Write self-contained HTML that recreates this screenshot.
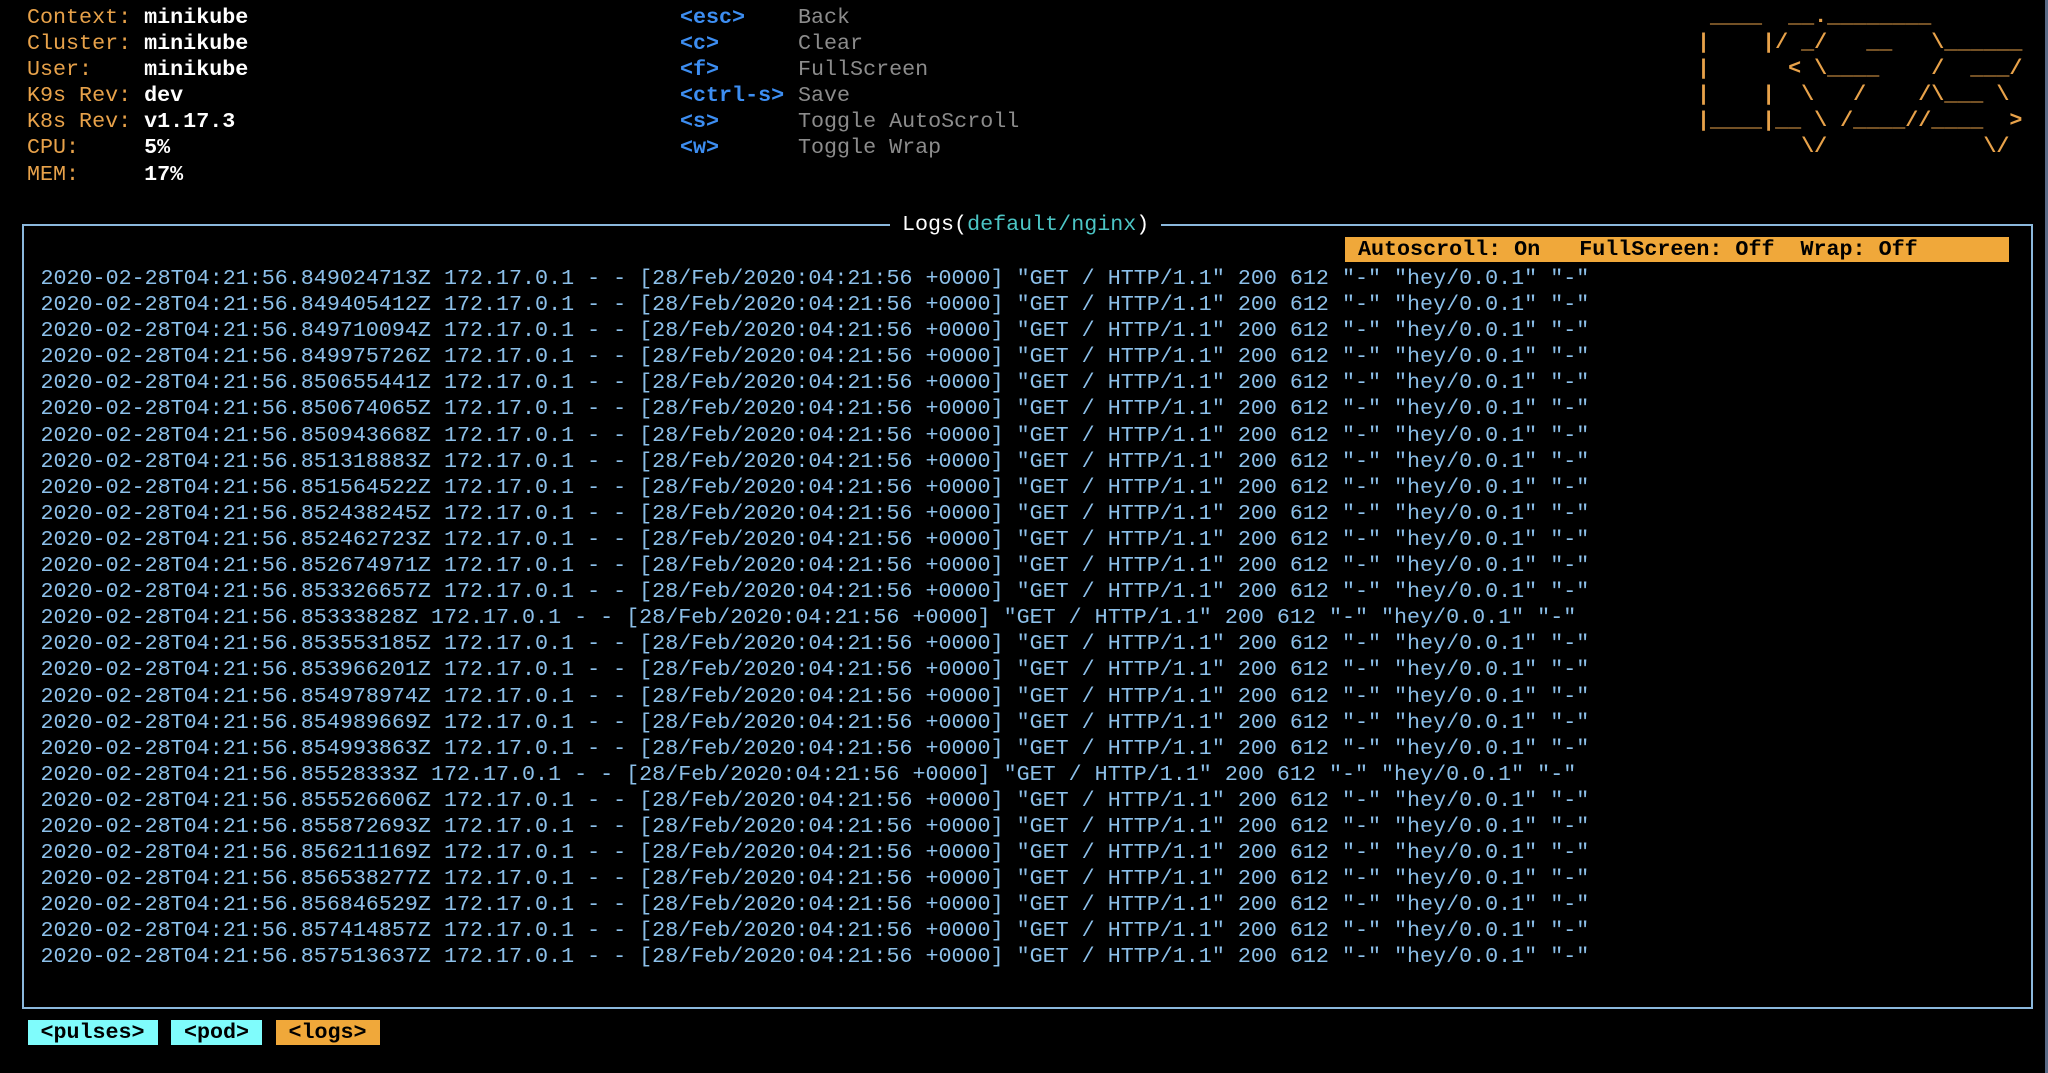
<!DOCTYPE html>
<html><head><meta charset="utf-8"><style>
html,body{margin:0;padding:0;background:#000;width:2048px;height:1073px;overflow:hidden;position:relative}
*{font-family:"Liberation Mono",monospace;font-size:21.7px;line-height:26.1px}
.a{position:absolute;white-space:pre}
.o{color:#e8a24a}.w{color:#fff;font-weight:bold}
.k{color:#3d8ef2;font-weight:bold}.d{color:#8c8c8c}
.log{color:#8cc0ea}
</style></head><body>
<div class="a" style="left:27px;top:5px"><span class="o">Context: </span><span class="w">minikube</span>
<span class="o">Cluster: </span><span class="w">minikube</span>
<span class="o">User:    </span><span class="w">minikube</span>
<span class="o">K9s Rev: </span><span class="w">dev</span>
<span class="o">K8s Rev: </span><span class="w">v1.17.3</span>
<span class="o">CPU:     </span><span class="w">5%</span>
<span class="o">MEM:     </span><span class="w">17%</span></div>
<div class="a" style="left:680px;top:5px"><span class="k">&lt;esc&gt;</span>
<span class="k">&lt;c&gt;</span>
<span class="k">&lt;f&gt;</span>
<span class="k">&lt;ctrl-s&gt;</span>
<span class="k">&lt;s&gt;</span>
<span class="k">&lt;w&gt;</span></div>
<div class="a d" style="left:798px;top:5px">Back
Clear
FullScreen
Save
Toggle AutoScroll
Toggle Wrap</div>
<div class="a" style="left:1697px;top:4px;color:#e8a24a;font-weight:bold"> ____  __.________
|    |/ _/   __   \______
|      &lt; \____    /  ___/
|    |  \   /    /\___ \
|____|__ \ /____//____  &gt;
        \/            \/</div>
<div style="position:absolute;left:22px;top:224px;width:2007px;height:781px;border:2px solid #8bb8dc"></div>
<div class="a" style="left:890px;top:212px;background:#000;padding:0 12px;color:#fff">Logs(<span style="color:#4cc6c6">default/nginx</span>)</div>
<div class="a" style="left:1345px;top:237px;width:664px;height:25px;background:#f0a83a;color:#000;font-weight:bold;line-height:26px;padding-left:13px;box-sizing:border-box">Autoscroll: On   FullScreen: Off  Wrap: Off</div>
<div class="a log" style="left:40.5px;top:266px">2020-02-28T04:21:56.849024713Z 172.17.0.1 - - [28/Feb/2020:04:21:56 +0000] "GET / HTTP/1.1" 200 612 "-" "hey/0.0.1" "-"
2020-02-28T04:21:56.849405412Z 172.17.0.1 - - [28/Feb/2020:04:21:56 +0000] "GET / HTTP/1.1" 200 612 "-" "hey/0.0.1" "-"
2020-02-28T04:21:56.849710094Z 172.17.0.1 - - [28/Feb/2020:04:21:56 +0000] "GET / HTTP/1.1" 200 612 "-" "hey/0.0.1" "-"
2020-02-28T04:21:56.849975726Z 172.17.0.1 - - [28/Feb/2020:04:21:56 +0000] "GET / HTTP/1.1" 200 612 "-" "hey/0.0.1" "-"
2020-02-28T04:21:56.850655441Z 172.17.0.1 - - [28/Feb/2020:04:21:56 +0000] "GET / HTTP/1.1" 200 612 "-" "hey/0.0.1" "-"
2020-02-28T04:21:56.850674065Z 172.17.0.1 - - [28/Feb/2020:04:21:56 +0000] "GET / HTTP/1.1" 200 612 "-" "hey/0.0.1" "-"
2020-02-28T04:21:56.850943668Z 172.17.0.1 - - [28/Feb/2020:04:21:56 +0000] "GET / HTTP/1.1" 200 612 "-" "hey/0.0.1" "-"
2020-02-28T04:21:56.851318883Z 172.17.0.1 - - [28/Feb/2020:04:21:56 +0000] "GET / HTTP/1.1" 200 612 "-" "hey/0.0.1" "-"
2020-02-28T04:21:56.851564522Z 172.17.0.1 - - [28/Feb/2020:04:21:56 +0000] "GET / HTTP/1.1" 200 612 "-" "hey/0.0.1" "-"
2020-02-28T04:21:56.852438245Z 172.17.0.1 - - [28/Feb/2020:04:21:56 +0000] "GET / HTTP/1.1" 200 612 "-" "hey/0.0.1" "-"
2020-02-28T04:21:56.852462723Z 172.17.0.1 - - [28/Feb/2020:04:21:56 +0000] "GET / HTTP/1.1" 200 612 "-" "hey/0.0.1" "-"
2020-02-28T04:21:56.852674971Z 172.17.0.1 - - [28/Feb/2020:04:21:56 +0000] "GET / HTTP/1.1" 200 612 "-" "hey/0.0.1" "-"
2020-02-28T04:21:56.853326657Z 172.17.0.1 - - [28/Feb/2020:04:21:56 +0000] "GET / HTTP/1.1" 200 612 "-" "hey/0.0.1" "-"
2020-02-28T04:21:56.85333828Z 172.17.0.1 - - [28/Feb/2020:04:21:56 +0000] "GET / HTTP/1.1" 200 612 "-" "hey/0.0.1" "-"
2020-02-28T04:21:56.853553185Z 172.17.0.1 - - [28/Feb/2020:04:21:56 +0000] "GET / HTTP/1.1" 200 612 "-" "hey/0.0.1" "-"
2020-02-28T04:21:56.853966201Z 172.17.0.1 - - [28/Feb/2020:04:21:56 +0000] "GET / HTTP/1.1" 200 612 "-" "hey/0.0.1" "-"
2020-02-28T04:21:56.854978974Z 172.17.0.1 - - [28/Feb/2020:04:21:56 +0000] "GET / HTTP/1.1" 200 612 "-" "hey/0.0.1" "-"
2020-02-28T04:21:56.854989669Z 172.17.0.1 - - [28/Feb/2020:04:21:56 +0000] "GET / HTTP/1.1" 200 612 "-" "hey/0.0.1" "-"
2020-02-28T04:21:56.854993863Z 172.17.0.1 - - [28/Feb/2020:04:21:56 +0000] "GET / HTTP/1.1" 200 612 "-" "hey/0.0.1" "-"
2020-02-28T04:21:56.85528333Z 172.17.0.1 - - [28/Feb/2020:04:21:56 +0000] "GET / HTTP/1.1" 200 612 "-" "hey/0.0.1" "-"
2020-02-28T04:21:56.855526606Z 172.17.0.1 - - [28/Feb/2020:04:21:56 +0000] "GET / HTTP/1.1" 200 612 "-" "hey/0.0.1" "-"
2020-02-28T04:21:56.855872693Z 172.17.0.1 - - [28/Feb/2020:04:21:56 +0000] "GET / HTTP/1.1" 200 612 "-" "hey/0.0.1" "-"
2020-02-28T04:21:56.856211169Z 172.17.0.1 - - [28/Feb/2020:04:21:56 +0000] "GET / HTTP/1.1" 200 612 "-" "hey/0.0.1" "-"
2020-02-28T04:21:56.856538277Z 172.17.0.1 - - [28/Feb/2020:04:21:56 +0000] "GET / HTTP/1.1" 200 612 "-" "hey/0.0.1" "-"
2020-02-28T04:21:56.856846529Z 172.17.0.1 - - [28/Feb/2020:04:21:56 +0000] "GET / HTTP/1.1" 200 612 "-" "hey/0.0.1" "-"
2020-02-28T04:21:56.857414857Z 172.17.0.1 - - [28/Feb/2020:04:21:56 +0000] "GET / HTTP/1.1" 200 612 "-" "hey/0.0.1" "-"
2020-02-28T04:21:56.857513637Z 172.17.0.1 - - [28/Feb/2020:04:21:56 +0000] "GET / HTTP/1.1" 200 612 "-" "hey/0.0.1" "-"</div>
<div class="a" style="left:27.5px;top:1020px;width:130px;height:25px;background:#7ffcfc;color:#000;font-weight:bold;line-height:26px;text-align:center">&lt;pulses&gt;</div>
<div class="a" style="left:171px;top:1020px;width:91px;height:25px;background:#7ffcfc;color:#000;font-weight:bold;line-height:26px;text-align:center">&lt;pod&gt;</div>
<div class="a" style="left:275.5px;top:1020px;width:104px;height:25px;background:#f0a83a;color:#000;font-weight:bold;line-height:26px;text-align:center">&lt;logs&gt;</div>
<div style="position:absolute;left:2045px;top:0;width:3px;height:1073px;background:#5a6a86"></div>
</body></html>
